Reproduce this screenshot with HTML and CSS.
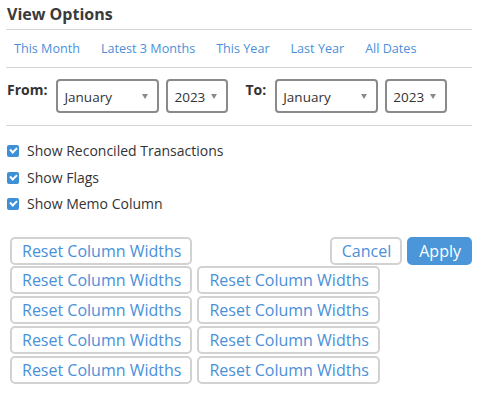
FILE: index.html
```html
<!DOCTYPE html>
<html lang="en">
<head>
  <meta charset="UTF-8" />
  <title>View Options</title>
  <link rel="stylesheet" href="styles.css">
</head>
<body>

  <div class="panel">
    <h2 class="panel-title">View Options</h2>

    <div class="quick-links">
      <a href="#">This Month</a>
      <a href="#">Latest 3 Months</a>
      <a href="#">This Year</a>
      <a href="#">Last Year</a>
      <a href="#">All Dates</a>
    </div>

    <div class="date-range">
      <span class="range-label">From:</span>
      <div class="select select-month">January<span class="arrow"></span></div>
      <div class="select select-year">2023<span class="arrow"></span></div>
      <span class="range-label label-to">To:</span>
      <div class="select select-month">January<span class="arrow"></span></div>
      <div class="select select-year">2023<span class="arrow"></span></div>
    </div>

    <div class="options">
      <label class="option"><span class="check"></span>Show Reconciled Transactions</label>
      <label class="option"><span class="check"></span>Show Flags</label>
      <label class="option"><span class="check"></span>Show Memo Column</label>
    </div>

    <div class="actions">
      <div class="btn-row">
        <button class="btn">Reset Column Widths</button>
        <div class="right-group">
          <button class="btn">Cancel</button>
          <button class="btn btn-primary">Apply</button>
        </div>
      </div>
      <div class="btn-row">
        <button class="btn">Reset Column Widths</button>
        <button class="btn">Reset Column Widths</button>
      </div>
      <div class="btn-row">
        <button class="btn">Reset Column Widths</button>
        <button class="btn">Reset Column Widths</button>
      </div>
      <div class="btn-row">
        <button class="btn">Reset Column Widths</button>
        <button class="btn">Reset Column Widths</button>
      </div>
      <div class="btn-row">
        <button class="btn">Reset Column Widths</button>
        <button class="btn">Reset Column Widths</button>
      </div>
    </div>
  </div>

</body>
</html>
```

FILE: styles.css
```css
body {
  margin: 0;
  background: #fff;
  font-family: 'Open Sans', 'Liberation Sans', sans-serif;
  color: #333;
}

.panel {
  width: 466px;
  padding: 3px 0 0 6px;
}

.panel-title {
  margin: 0;
  padding: 0 0 4px 1px;
  font-size: 16px;
  font-weight: bold;
  line-height: 22px;
  color: #3a3a3a;
  border-bottom: 1px solid #d4d4d4;
}

/* quick links */
.quick-links {
  display: flex;
  padding: 8px 0 7px 8px;
  border-bottom: 1px solid #d4d4d4;
}

.quick-links a {
  font-size: 12.6px;
  line-height: 22px;
  color: #4a90d9;
  text-decoration: none;
  margin-right: 21px;
}

/* date selects */
.date-range {
  display: flex;
  align-items: flex-start;
  padding: 11px 0 12px 1px;
  border-bottom: 1px solid #d4d4d4;
}

.range-label {
  font-size: 14px;
  font-weight: bold;
  line-height: 18px;
  margin-top: 2px;
  margin-right: 9px;
  color: #333;
}

.label-to {
  margin-left: 10px;
  margin-right: 9px;
}

.select {
  position: relative;
  box-sizing: border-box;
  height: 34px;
  border: 2px solid #8a8a8a;
  border-radius: 4px;
  padding: 7px 0 0 6px;
  font-size: 13.5px;
  line-height: 18px;
  color: #333;
  margin-right: 7px;
}

.select-month {
  width: 103px;
}

.select-year {
  width: 62px;
}

.arrow {
  position: absolute;
  right: 9px;
  top: 13px;
  width: 0;
  height: 0;
  border-left: 3.5px solid transparent;
  border-right: 3.5px solid transparent;
  border-top: 5px solid #8a8a8a;
}

/* checkboxes */
.options {
  padding: 12px 0 0 1px;
}

.option {
  display: flex;
  align-items: center;
  font-size: 14px;
  line-height: 20px;
  height: 26.5px;
  color: #333;
}

.check {
  position: relative;
  width: 12px;
  height: 12px;
  border-radius: 2px;
  background: #3d8fd8;
  margin-right: 8px;
}

.check::after {
  content: '';
  position: absolute;
  left: 3px;
  top: 2px;
  width: 5px;
  height: 3px;
  border-left: 2px solid #fff;
  border-bottom: 2px solid #fff;
  transform: rotate(-45deg);
}

/* buttons */
.actions {
  padding: 19px 0 0 4px;
}

.btn-row {
  display: flex;
  gap: 5px;
  margin-bottom: 1.75px;
}

.btn-row:first-child {
  justify-content: space-between;
}

.right-group {
  display: flex;
  gap: 5px;
}

.btn {
  box-sizing: border-box;
  height: 28px;
  border: 2px solid #d2d2d2;
  border-radius: 5px;
  background: #fff;
  color: #4a90d9;
  font-family: 'Open Sans', 'Liberation Sans', sans-serif;
  font-size: 16px;
  line-height: 22px;
  padding: 0 9px 0 10px;
  cursor: pointer;
}

.btn-primary {
  background: #4a96d9;
  border-color: #4a96d9;
  color: #fff;
}
```
